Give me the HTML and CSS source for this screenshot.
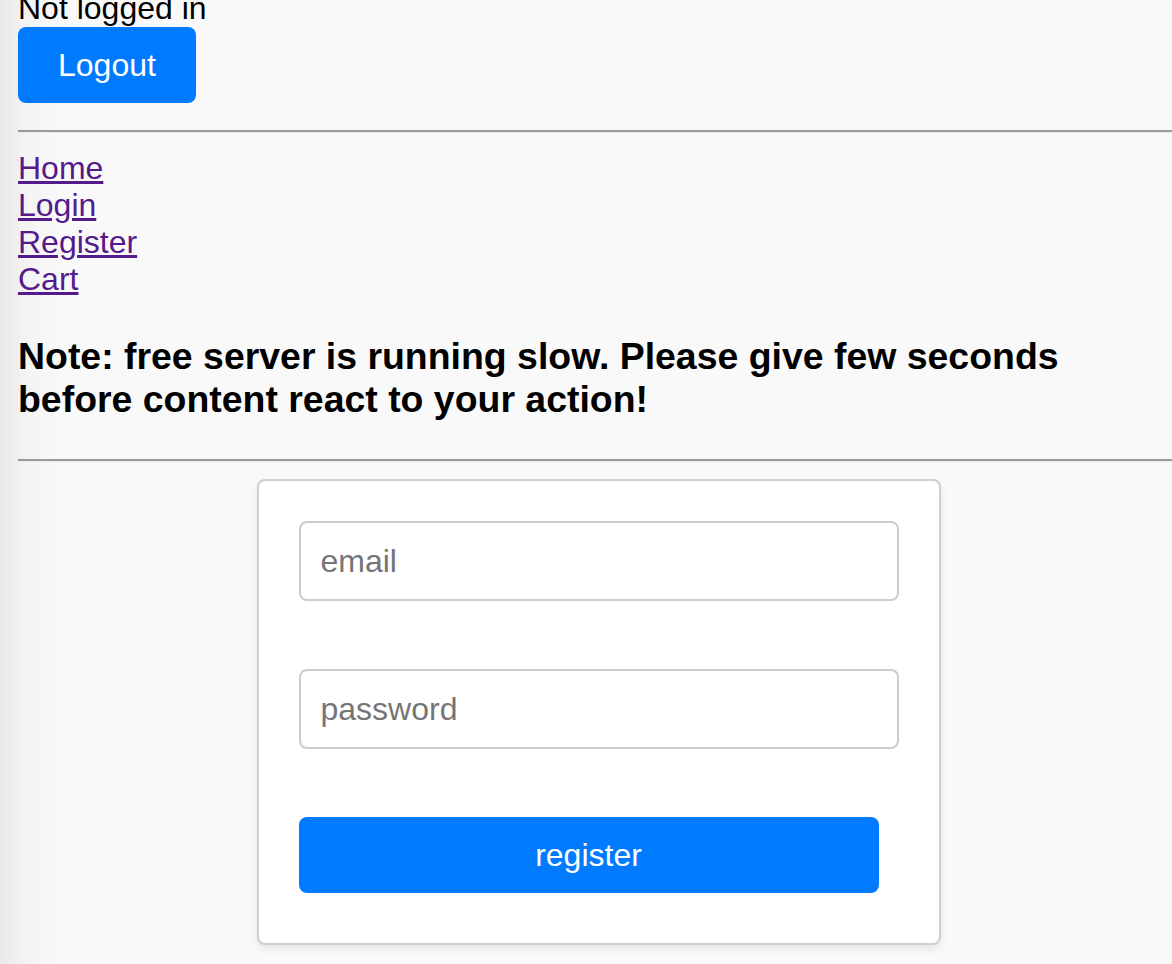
FILE: index.html
```html
<!DOCTYPE html>
<html lang="en">
<head>
    <meta charset="UTF-8">
    <meta name="viewport" content="width=device-width, initial-scale=1.0">
    <title>Register</title>
    <link rel="stylesheet" href="styles.css">
</head>
<body>
    <div class="page">
        <div class="status">Not logged in</div>
        <button class="logout-btn">Logout</button>
        <hr class="rule">
        <nav class="nav">
            <a href="#">Home</a>
            <a href="#">Login</a>
            <a href="#">Register</a>
            <a href="#">Cart</a>
        </nav>
        <h3 class="note">Note: free server is running slow. Please give few seconds before content react to your action!</h3>
        <hr class="rule">
        <div class="form-wrap">
            <form class="auth-form">
                <input type="text" placeholder="email">
                <input type="password" placeholder="password">
                <button type="button" class="submit-btn">register</button>
            </form>
        </div>
    </div>
</body>
</html>
```

FILE: styles.css
```css
html {
    overflow: hidden;
}

body {
    margin: 0;
    font-family: 'Liberation Sans', Arial, sans-serif;
    font-size: 32px;
    color: #000;
    background: linear-gradient(to right, #e8e8e8 0, #f3f3f3 25px, #f9f9f9 60px);
    min-height: 100vh;
}

.page {
    width: 1161px;
    padding: 0 18px;
    margin-top: -10px;
}

.status {
    line-height: 37px;
}

.logout-btn {
    display: block;
    height: 76px;
    padding: 0 40px;
    margin-bottom: 27px;
    background-color: #007bff;
    color: #fff;
    border: none;
    border-radius: 8px;
    font-family: inherit;
    font-size: 32px;
}

.rule {
    margin: 0 0 17px;
    border: none;
    border-top: 2px solid #9a9a9a;
    border-bottom: 1px solid #ececec;
}

.nav a {
    display: block;
    width: fit-content;
    line-height: 37px;
    color: #551a8b;
}

.note {
    margin: 37px 0 38px;
    font-size: 37.44px;
    line-height: 43px;
    font-weight: 700;
}

.form-wrap {
    display: flex;
    justify-content: center;
    margin-top: 17px;
}

.auth-form {
    width: 600px;
    padding: 40px 40px 50px;
    background-color: #fff;
    border: 2px solid #cfcfcf;
    border-radius: 8px;
    box-shadow: 0 4px 8px rgba(0, 0, 0, 0.08);
    display: flex;
    flex-direction: column;
    gap: 68px;
}

.auth-form input {
    box-sizing: border-box;
    width: 600px;
    height: 80px;
    padding: 0 20px;
    border: 2px solid #cccccc;
    border-radius: 8px;
    font-family: inherit;
    font-size: 32px;
    color: #333;
    outline: none;
}

.auth-form input::placeholder {
    color: #757575;
}

.submit-btn {
    width: 580px;
    height: 76px;
    background-color: #007bff;
    color: #fff;
    border: none;
    border-radius: 8px;
    font-family: inherit;
    font-size: 32px;
}
```
